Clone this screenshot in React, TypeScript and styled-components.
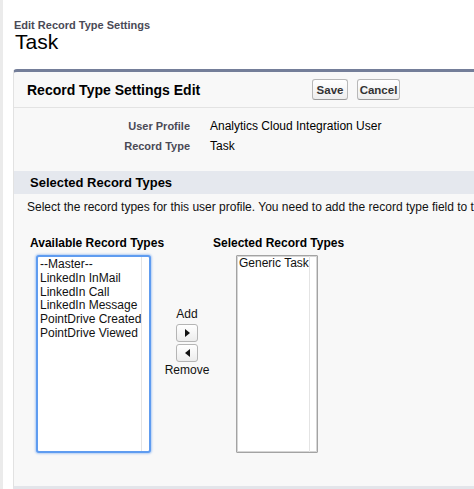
import React from "react";
import styled, { createGlobalStyle } from "styled-components";

const GlobalStyle = createGlobalStyle`
  html, body {
    margin: 0;
    padding: 0;
    background: #ffffff;
    overflow: hidden;
  }
  body {
    font-family: "Liberation Sans", Arial, Helvetica, sans-serif;
    color: #000;
  }
`;

const availableTypes = [
  "--Master--",
  "LinkedIn InMail",
  "LinkedIn Call",
  "LinkedIn Message",
  "PointDrive Created",
  "PointDrive Viewed",
];

const selectedTypes = ["Generic Task"];

export default function App() {
  return (
    <>
      <GlobalStyle />
      <Shell>
        <EdgeStrip />
        <Content>
          <TitleBlock>
            <Subtitle>Edit Record Type Settings</Subtitle>
            <PageTitle>Task</PageTitle>
          </TitleBlock>

          <Panel>
            <PanelHeader>
              <PanelTitle>Record Type Settings Edit</PanelTitle>
              <ButtonBar>
                <Button $width={36}>Save</Button>
                <Button $width={43}>Cancel</Button>
              </ButtonBar>
            </PanelHeader>

            <Details>
              <Label>User Profile</Label>
              <Value>Analytics Cloud Integration User</Value>
              <Label>Record Type</Label>
              <Value>Task</Value>
            </Details>

            <SectionHeader>Selected Record Types</SectionHeader>
            <Description>
              Select the record types for this user profile. You need to add
              the record type field to the page layout.
            </Description>

            <Picker>
              <ColumnLabel>Available Record Types</ColumnLabel>
              <span />
              <ColumnLabel>Selected Record Types</ColumnLabel>

              <ListBox $offset={6} $width={115} $focused>
                <Options>
                  {availableTypes.map((t) => (
                    <Option key={t}>{t}</Option>
                  ))}
                </Options>
                <Track />
              </ListBox>

              <Mover>
                <MoverText>Add</MoverText>
                <ArrowButton aria-label="Add">
                  <svg width="5" height="8" viewBox="0 0 5 8">
                    <polygon points="0,0 5,4 0,8" fill="#111" />
                  </svg>
                </ArrowButton>
                <ArrowButton aria-label="Remove">
                  <svg width="5" height="8" viewBox="0 0 5 8">
                    <polygon points="5,0 0,4 5,8" fill="#111" />
                  </svg>
                </ArrowButton>
                <MoverText>Remove</MoverText>
              </Mover>

              <ListBox $offset={23} $width={82}>
                <Options>
                  {selectedTypes.map((t) => (
                    <Option key={t}>{t}</Option>
                  ))}
                </Options>
                <Track />
              </ListBox>
            </Picker>
          </Panel>
        </Content>
      </Shell>
    </>
  );
}

const Shell = styled.div`
  display: flex;
  width: 474px;
  height: 489px;
  overflow: hidden;
`;

const EdgeStrip = styled.div`
  flex: 0 0 3px;
  background: #ebebeb;
`;

const Content = styled.div`
  flex: 0 0 auto;
  padding-left: 10px;
`;

const TitleBlock = styled.div`
  padding: 18px 0 0 1px;
`;

const Subtitle = styled.div`
  font-size: 11px;
  line-height: 14px;
  font-weight: bold;
  color: #4a4a56;
`;

const PageTitle = styled.h1`
  margin: -1px 0 0 1px;
  font-size: 21px;
  line-height: 22px;
  font-weight: normal;
  color: #000;
`;

const Panel = styled.div`
  margin-top: 16px;
  width: 580px;
  background: #f8f8f8;
  border-top: 3px solid #747e99;
  border-left: 1px solid #e2e2e2;
  border-bottom: 3px solid #e3e5ea;
  border-radius: 4px 0 0 0;
  padding-bottom: 33px;
`;

const PanelHeader = styled.div`
  display: flex;
  align-items: center;
  height: 35px;
  padding-left: 13px;
  border-bottom: 1px solid #e3e3e3;
`;

const PanelTitle = styled.h2`
  margin: 0;
  width: 285px;
  font-size: 14px;
  font-weight: bold;
  color: #000;
  white-space: nowrap;
`;

const ButtonBar = styled.div`
  display: flex;
  gap: 9px;
`;

const Button = styled.button<{ $width: number }>`
  width: ${(p) => p.$width}px;
  height: 21px;
  padding: 0;
  font-family: "Liberation Sans", Arial, sans-serif;
  font-size: 11.5px;
  font-weight: bold;
  color: #333;
  background: linear-gradient(#ffffff, #eeeeee);
  border: 1px solid #b8b8b8;
  border-bottom-color: #9a9a9a;
  border-radius: 3px;
`;

const Details = styled.div`
  display: grid;
  grid-template-columns: 176px auto;
  column-gap: 20px;
  grid-auto-rows: 20px;
  align-items: center;
  padding: 8px 0 15px;
`;

const Label = styled.div`
  text-align: right;
  font-size: 11px;
  font-weight: bold;
  color: #4a4a56;
`;

const Value = styled.div`
  font-size: 12px;
  color: #000;
`;

const SectionHeader = styled.h3`
  margin: 0;
  height: 23px;
  line-height: 23px;
  padding-left: 16px;
  font-size: 13px;
  font-weight: bold;
  color: #000;
  background: #e5e8ee;
`;

const Description = styled.p`
  margin: 5px 0 0;
  padding-left: 13px;
  font-size: 12px;
  line-height: 16px;
  color: #111;
  white-space: nowrap;
`;

const Picker = styled.div`
  display: grid;
  grid-template-columns: 131px 52px 140px;
  grid-template-rows: 16px auto;
  row-gap: 4px;
  margin: 20px 0 0 16px;
`;

const ColumnLabel = styled.div`
  font-size: 12px;
  line-height: 16px;
  font-weight: bold;
  color: #000;
  white-space: nowrap;
`;

const ListBox = styled.div<{ $offset: number; $width: number; $focused?: boolean }>`
  display: flex;
  margin-left: ${(p) => p.$offset}px;
  width: ${(p) => p.$width}px;
  height: 198px;
  box-sizing: border-box;
  background: #fff;
  border: ${(p) => (p.$focused ? "2px solid #5f9cf0" : "1px solid #a3a3a3")};
  border-radius: ${(p) => (p.$focused ? "3px" : "1px")};
  box-shadow: ${(p) =>
    p.$focused
      ? "0 0 2px 1px rgba(95, 156, 240, 0.45)"
      : "inset 0 0 0 1px #d6d6d6"};
`;

const Options = styled.div`
  flex: 1;
  padding: 1px 0 0 2px;
`;

const Option = styled.div`
  font-size: 12px;
  line-height: 13.8px;
  color: #111;
  white-space: nowrap;
`;

const Track = styled.div`
  flex: 0 0 10px;
  border-left: 1px solid #e4e4e4;
`;

const Mover = styled.div`
  display: flex;
  flex-direction: column;
  align-items: center;
  padding-top: 51px;
`;

const MoverText = styled.div`
  font-size: 12px;
  line-height: 16px;
  color: #111;
`;

const ArrowButton = styled.div`
  display: flex;
  align-items: center;
  justify-content: center;
  width: 22px;
  height: 18px;
  box-sizing: border-box;
  margin-top: 2px;
  background: linear-gradient(#ffffff, #ececec);
  border: 1px solid #b5b5b5;
  border-radius: 3px;

  &:first-of-type {
    margin-top: 4px;
  }
`;
